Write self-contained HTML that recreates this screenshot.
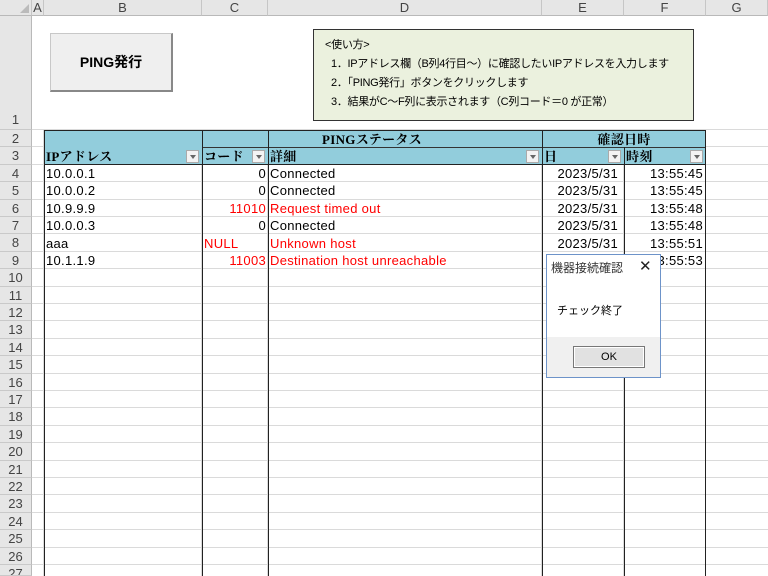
<!DOCTYPE html>
<html><head><meta charset="utf-8"><style>
*{margin:0;padding:0;box-sizing:border-box}
html,body{width:768px;height:576px;overflow:hidden}
body{background:#fff;position:relative;font-family:"Liberation Sans","Noto Sans CJK JP",sans-serif;font-size:13px;color:#000}
.a{position:absolute}
.ch{top:0;height:16px;background:#e6e6e6;border-right:1px solid #c6c6c6;border-bottom:1px solid #b9b9b9;text-align:center;font-size:13px;line-height:16px;color:#444}
.rh{left:0;width:32px;background:#e6e6e6;border-bottom:1px solid #c9c9c9;border-right:1px solid #b9b9b9;text-align:center;color:#444;font-size:13px}
.hl{left:32px;width:736px;height:1px;background:#dadada}
.vl{width:1px;background:#dadada;top:130px;height:446px}
.bl{width:1px;background:#222;top:130px;height:446px}
.t{height:17.4px;line-height:17.4px;white-space:nowrap;overflow:hidden;font-size:13px;letter-spacing:.3px}
.r{text-align:right}
.red{color:#f00}
.fb{width:13px;height:13px;background:#f3f3f3;border:1px solid #aaa;}
.fb:after{content:"";position:absolute;left:3px;top:4px;border-left:3px solid transparent;border-right:3px solid transparent;border-top:4px solid #666}
.hd{font-weight:bold;font-family:'Liberation Serif','Noto Serif CJK SC',serif}
</style></head><body>
<div class="a ch" style="left:0;width:32px"><svg width="32" height="16"><polygon points="20,13 29,13 29,4" fill="#bbb"/></svg></div>
<div class="a ch" style="left:32px;width:12px">A</div>
<div class="a ch" style="left:44px;width:158px">B</div>
<div class="a ch" style="left:202px;width:66px">C</div>
<div class="a ch" style="left:268px;width:274px">D</div>
<div class="a ch" style="left:542px;width:82px">E</div>
<div class="a ch" style="left:624px;width:82px">F</div>
<div class="a ch" style="left:706px;width:62px">G</div>

<div class="a vl" style="left:43px"></div><div class="a vl" style="left:201px"></div><div class="a vl" style="left:267px"></div><div class="a vl" style="left:541px"></div><div class="a vl" style="left:623px"></div><div class="a vl" style="left:705px"></div>

<div class="a rh" style="top:16px;height:114px;line-height:208px">1</div>
<div class="a hl" style="top:129px"></div>
<div class="a rh" style="top:130px;height:17.4px;line-height:17px">2</div><div class="a hl" style="top:146.4px"></div>
<div class="a rh" style="top:147.4px;height:17.4px;line-height:17px">3</div><div class="a hl" style="top:163.8px"></div>
<div class="a rh" style="top:164.8px;height:17.4px;line-height:17px">4</div><div class="a hl" style="top:181.2px"></div>
<div class="a rh" style="top:182.2px;height:17.4px;line-height:17px">5</div><div class="a hl" style="top:198.6px"></div>
<div class="a rh" style="top:199.6px;height:17.4px;line-height:17px">6</div><div class="a hl" style="top:216px"></div>
<div class="a rh" style="top:217px;height:17.4px;line-height:17px">7</div><div class="a hl" style="top:233.4px"></div>
<div class="a rh" style="top:234.4px;height:17.4px;line-height:17px">8</div><div class="a hl" style="top:250.8px"></div>
<div class="a rh" style="top:251.8px;height:17.4px;line-height:17px">9</div><div class="a hl" style="top:268.2px"></div>
<div class="a rh" style="top:269.2px;height:17.4px;line-height:17px">10</div><div class="a hl" style="top:285.6px"></div>
<div class="a rh" style="top:286.6px;height:17.4px;line-height:17px">11</div><div class="a hl" style="top:303px"></div>
<div class="a rh" style="top:304px;height:17.4px;line-height:17px">12</div><div class="a hl" style="top:320.4px"></div>
<div class="a rh" style="top:321.4px;height:17.4px;line-height:17px">13</div><div class="a hl" style="top:337.8px"></div>
<div class="a rh" style="top:338.8px;height:17.4px;line-height:17px">14</div><div class="a hl" style="top:355.2px"></div>
<div class="a rh" style="top:356.2px;height:17.4px;line-height:17px">15</div><div class="a hl" style="top:372.6px"></div>
<div class="a rh" style="top:373.6px;height:17.4px;line-height:17px">16</div><div class="a hl" style="top:390px"></div>
<div class="a rh" style="top:391px;height:17.4px;line-height:17px">17</div><div class="a hl" style="top:407.4px"></div>
<div class="a rh" style="top:408.4px;height:17.4px;line-height:17px">18</div><div class="a hl" style="top:424.8px"></div>
<div class="a rh" style="top:425.8px;height:17.4px;line-height:17px">19</div><div class="a hl" style="top:442.2px"></div>
<div class="a rh" style="top:443.2px;height:17.4px;line-height:17px">20</div><div class="a hl" style="top:459.6px"></div>
<div class="a rh" style="top:460.6px;height:17.4px;line-height:17px">21</div><div class="a hl" style="top:477px"></div>
<div class="a rh" style="top:478px;height:17.4px;line-height:17px">22</div><div class="a hl" style="top:494.4px"></div>
<div class="a rh" style="top:495.4px;height:17.4px;line-height:17px">23</div><div class="a hl" style="top:511.8px"></div>
<div class="a rh" style="top:512.8px;height:17.4px;line-height:17px">24</div><div class="a hl" style="top:529.2px"></div>
<div class="a rh" style="top:530.2px;height:17.4px;line-height:17px">25</div><div class="a hl" style="top:546.6px"></div>
<div class="a rh" style="top:547.6px;height:17.4px;line-height:17px">26</div><div class="a hl" style="top:564px"></div>
<div class="a rh" style="top:565px;height:11px;line-height:17px;overflow:hidden">27</div>

<div class="a" style="left:44px;top:130px;width:662px;height:35px;background:#92cddc"></div>
<div class="a" style="left:44px;top:130px;width:662px;height:1px;background:#222"></div>
<div class="a" style="left:202px;top:147px;width:504px;height:1px;background:#333"></div>
<div class="a" style="left:44px;top:164px;width:662px;height:1px;background:#222"></div>
<div class="a bl" style="left:44px"></div><div class="a bl" style="left:202px"></div><div class="a bl" style="left:268px"></div><div class="a bl" style="left:542px"></div><div class="a bl" style="left:624px;top:147px;height:429px"></div><div class="a bl" style="left:705px"></div>

<div class="a t hd" style="left:202px;top:131px;width:340px;text-align:center">PINGステータス</div>
<div class="a t hd" style="left:542px;top:131px;width:164px;text-align:center">確認日時</div>
<div class="a t hd" style="left:46px;top:148px">IPアドレス</div>
<div class="a fb" style="left:186px;top:150px"></div>
<div class="a t hd" style="left:204px;top:148px">コード</div>
<div class="a fb" style="left:252px;top:150px"></div>
<div class="a t hd" style="left:270px;top:148px">詳細</div>
<div class="a fb" style="left:526px;top:150px"></div>
<div class="a t hd" style="left:544px;top:148px">日</div>
<div class="a fb" style="left:608px;top:150px"></div>
<div class="a t hd" style="left:626px;top:148px">時刻</div>
<div class="a fb" style="left:690px;top:150px"></div>

<div class="a t" style="left:46px;top:165px">10.0.0.1</div><div class="a t r" style="left:202px;top:165px;width:64px">0</div><div class="a t" style="left:270px;top:165px">Connected</div><div class="a t r" style="left:542px;top:165px;width:76px">2023/5/31</div><div class="a t r" style="left:624px;top:165px;width:79px">13:55:45</div>
<div class="a t" style="left:46px;top:182.4px">10.0.0.2</div><div class="a t r" style="left:202px;top:182.4px;width:64px">0</div><div class="a t" style="left:270px;top:182.4px">Connected</div><div class="a t r" style="left:542px;top:182.4px;width:76px">2023/5/31</div><div class="a t r" style="left:624px;top:182.4px;width:79px">13:55:45</div>
<div class="a t" style="left:46px;top:199.8px">10.9.9.9</div><div class="a t r red" style="left:202px;top:199.8px;width:64px">11010</div><div class="a t red" style="left:270px;top:199.8px">Request timed out</div><div class="a t r" style="left:542px;top:199.8px;width:76px">2023/5/31</div><div class="a t r" style="left:624px;top:199.8px;width:79px">13:55:48</div>
<div class="a t" style="left:46px;top:217.2px">10.0.0.3</div><div class="a t r" style="left:202px;top:217.2px;width:64px">0</div><div class="a t" style="left:270px;top:217.2px">Connected</div><div class="a t r" style="left:542px;top:217.2px;width:76px">2023/5/31</div><div class="a t r" style="left:624px;top:217.2px;width:79px">13:55:48</div>
<div class="a t" style="left:46px;top:234.6px">aaa</div><div class="a t red" style="left:204px;top:234.6px">NULL</div><div class="a t red" style="left:270px;top:234.6px">Unknown host</div><div class="a t r" style="left:542px;top:234.6px;width:76px">2023/5/31</div><div class="a t r" style="left:624px;top:234.6px;width:79px">13:55:51</div>
<div class="a t" style="left:46px;top:252px">10.1.1.9</div><div class="a t r red" style="left:202px;top:252px;width:64px">11003</div><div class="a t red" style="left:270px;top:252px">Destination host unreachable</div><div class="a t r" style="left:624px;top:252px;width:79px">13:55:53</div>

<div class="a" style="left:50px;top:33px;width:123px;height:59px;background:#efefef;border:1px solid #c8c8c8;border-right:2px solid #888;border-bottom:2px solid #888;text-align:center;line-height:56px;font-weight:bold;font-size:14px">PING発行</div>

<div class="a" style="left:313px;top:29px;width:381px;height:92px;background:#ebf1de;border:1px solid #333;font-size:11px;line-height:19px;padding:6px 0 0 11px;white-space:nowrap;letter-spacing:-0.3px">
<div>&lt;使い方&gt;</div>
<div style="padding-left:6px">1．IPアドレス欄（B列4行目～）に確認したいIPアドレスを入力します</div>
<div style="padding-left:6px">2．「PING発行」ボタンをクリックします</div>
<div style="padding-left:6px">3．結果がC～F列に表示されます（C列コード＝0 が正常）</div>
</div>

<div class="a" style="left:546px;top:254px;width:115px;height:124px;background:#fff;border:1px solid #6d93c9">
<div class="a" style="left:4px;top:4px;font-size:12px;color:#333">機器接続確認</div>
<div class="a" style="left:92px;top:2px;font-size:15px;color:#222">✕</div>
<div class="a" style="left:10px;top:47px;font-size:11px">チェック終了</div>
<div class="a" style="left:0;top:82px;width:113px;height:40px;background:#f0f0f0"></div>
<div class="a" style="left:26px;top:91px;width:72px;height:22px;background:#e1e1e1;border:1px solid #777;box-shadow:inset 0 0 0 1px #fff;text-align:center;line-height:20px;font-size:11px">OK</div>
</div>
</body></html>
